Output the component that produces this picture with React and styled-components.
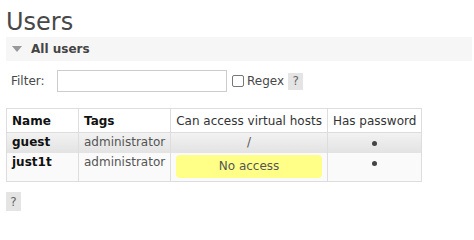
import React from "react";
import styled, { createGlobalStyle } from "styled-components";

const GlobalStyle = createGlobalStyle`
  html, body {
    margin: 0;
    padding: 0;
    background: #fff;
  }
  body {
    font-family: "DejaVu Sans", Verdana, sans-serif;
    font-size: 12px;
    color: #484848;
  }
`;

const Page = styled.div`
  padding: 0 2px 0 6px;
`;

const Title = styled.h1`
  margin: 0;
  padding-top: 9px;
  font-size: 24px;
  font-weight: normal;
  line-height: 27px;
  color: #484848;
`;

const SectionBar = styled.div`
  display: flex;
  align-items: center;
  gap: 9px;
  margin-top: 1px;
  height: 24px;
  padding-left: 6px;
  background: #f6f6f6;
  font-weight: bold;
  font-size: 12px;
  color: #444;
`;

const Arrow = styled.span`
  width: 0;
  height: 0;
  border-left: 5px solid transparent;
  border-right: 5px solid transparent;
  border-top: 6px solid #999;
`;

const FilterRow = styled.div`
  display: flex;
  align-items: center;
  margin-top: 9px;
  padding-left: 5px;
  height: 22px;
  font-size: 12px;
`;

const FilterLabel = styled.label`
  width: 46px;
`;

const FilterInput = styled.input`
  box-sizing: border-box;
  width: 170px;
  height: 22px;
  border: 1px solid #ccc;
  margin: 0 5px 0 0;
`;

const Check = styled.span`
  box-sizing: border-box;
  width: 12px;
  height: 12px;
  border: 1px solid #777;
  border-radius: 2px;
  margin-right: 3px;
`;

const Help = styled.span`
  display: inline-flex;
  align-items: center;
  justify-content: center;
  width: 15px;
  height: ${({ $tall }) => ($tall ? "19px" : "17px")};
  background: #e4e4e4;
  color: #666;
  font-size: 12px;
  margin-left: ${({ $gap }) => $gap || 0}px;
`;

const Table = styled.table`
  margin-top: 16px;
  border-collapse: collapse;
  border: 1px solid #ddd;
  font-size: 12px;
`;

const Th = styled.th`
  height: 23px;
  padding: 0 5px;
  text-align: left;
  font-weight: ${({ $bold }) => ($bold ? "bold" : "normal")};
  color: ${({ $bold }) => ($bold ? "#111" : "#333")};
  border: 1px solid #ddd;
  white-space: nowrap;
  &:first-child {
    width: 61px;
  }
  &:nth-child(2) {
    width: 81px;
  }
`;

const Row = styled.tr`
  background: ${({ $alt }) =>
    $alt ? "linear-gradient(#f2f2f2, #e2e2e2)" : "#fafafa"};
`;

const Td = styled.td`
  height: ${({ $tall }) => ($tall ? "28px" : "20px")};
  padding: 0 5px;
  vertical-align: top;
  line-height: 18px;
  border-left: 1px solid #ddd;
  text-align: ${({ $center }) => ($center ? "center" : "left")};
  font-weight: ${({ $bold }) => ($bold ? "bold" : "normal")};
  color: ${({ $bold }) => ($bold ? "#111" : "#555")};
`;

const Dot = styled.span`
  display: inline-block;
  width: 5px;
  height: 5px;
  margin-top: 8px;
  border-radius: 50%;
  background: #444;
  vertical-align: top;
`;

const NoAccess = styled.div`
  margin: 2px 0;
  height: 23px;
  line-height: 23px;
  text-align: center;
  background: #ffff88;
  border-radius: 4px;
  color: #555;
`;

const Footer = styled.div`
  margin-top: 10px;
`;

export default function App() {
  return (
    <Page>
      <GlobalStyle />
      <Title>Users</Title>
      <SectionBar>
        <Arrow />
        All users
      </SectionBar>
      <FilterRow>
        <FilterLabel>Filter:</FilterLabel>
        <FilterInput type="text" />
        <Check />
        Regex
        <Help $gap={4}>?</Help>
      </FilterRow>
      <Table>
        <thead>
          <tr>
            <Th $bold>Name</Th>
            <Th $bold>Tags</Th>
            <Th>Can access virtual hosts</Th>
            <Th>Has password</Th>
          </tr>
        </thead>
        <tbody>
          <Row $alt>
            <Td $bold>guest</Td>
            <Td>administrator</Td>
            <Td $center>/</Td>
            <Td $center><Dot /></Td>
          </Row>
          <Row>
            <Td $bold $tall>just1t</Td>
            <Td $tall>administrator</Td>
            <Td $tall>
              <NoAccess>No access</NoAccess>
            </Td>
            <Td $tall $center><Dot /></Td>
          </Row>
        </tbody>
      </Table>
      <Footer>
        <Help $tall>?</Help>
      </Footer>
    </Page>
  );
}
